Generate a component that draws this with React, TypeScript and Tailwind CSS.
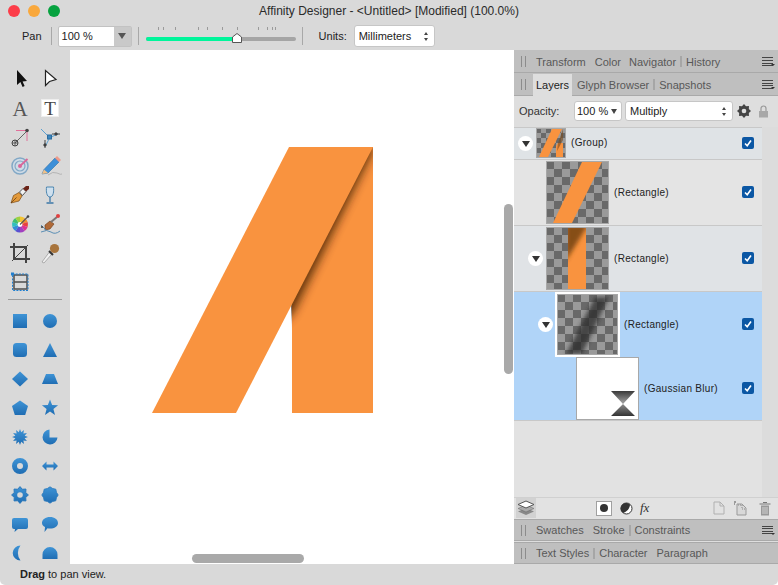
import { ReactNode } from 'react';

const sans = 'font-["Liberation_Sans",Arial,sans-serif]';

const starPoints = (n: number, outer: number, inner: number, start = -90) =>
  Array.from({ length: n * 2 }, (_, i) => {
    const r = i % 2 === 0 ? outer : inner;
    const a = ((start + (i * 180) / n) * Math.PI) / 180;
    return `${(12 + r * Math.cos(a)).toFixed(2)},${(12 + r * Math.sin(a)).toFixed(2)}`;
  }).join(' ');

const wheelColors = ['#f4c430', '#f08a30', '#e84040', '#e03090', '#a040c0', '#5a50d0', '#3090d8', '#30c0c0', '#40c070', '#a0d040'];

function ColorWheel() {
  const cx = 12;
  const cy = 12.5;
  const r = 8;
  return (
    <g>
      {wheelColors.map((c, i) => {
        const a0 = (i * 2 * Math.PI) / wheelColors.length - Math.PI / 2;
        const a1 = ((i + 1) * 2 * Math.PI) / wheelColors.length - Math.PI / 2;
        const d = `M${cx} ${cy} L${cx + r * Math.cos(a0)} ${cy + r * Math.sin(a0)} A${r} ${r} 0 0 1 ${cx + r * Math.cos(a1)} ${cy + r * Math.sin(a1)} Z`;
        return <path key={c} d={d} fill={c} />;
      })}
      <circle cx={cx} cy={cy} r="2.4" fill="#fff" />
      <path d="M12 12.5 L20 4.5" stroke="#555" strokeWidth="1.1" />
      <circle cx="20" cy="4.5" r="1.3" fill="#444" />
    </g>
  );
}

function Icon({ children }: { children: ReactNode }) {
  return (
    <svg width="24" height="24" viewBox="0 0 24 24" className="block">
      <defs>
        <linearGradient id="blue" x1="0" y1="0" x2="0" y2="1">
          <stop offset="0" stopColor="#3f94d6" />
          <stop offset="1" stopColor="#1f6db3" />
        </linearGradient>
      </defs>
      {children}
    </svg>
  );
}

const tools: ReactNode[] = [
  <path d="M9 3 L9 18 L12.4 15 L14.6 20 L16.6 19 L14.6 14.4 L19 14 Z" fill="#111" />,
  <path d="M7.5 3.5 L7.5 18.5 L11.5 14.5 L18 12.5 Z" fill="#fff" stroke="#222" strokeWidth="1.2" />,
  <text x="12" y="19.5" textAnchor="middle" fontFamily="Liberation Serif, serif" fontSize="21" fill="#555">A</text>,
  <g>
    <rect x="3.5" y="3.5" width="17" height="17" fill="#fff" stroke="#eee" strokeWidth="1" />
    <text x="12" y="18.5" textAnchor="middle" fontFamily="Liberation Serif, serif" fontSize="19" fill="#444">T</text>
  </g>,
  <g fill="none">
    <path d="M8 5.5 H19 V16" stroke="#e0709a" strokeWidth="1" />
    <path d="M7 18 L19 6" stroke="#666" strokeWidth="1" />
    <circle cx="19" cy="5.5" r="1.8" fill="#444" />
    <circle cx="7" cy="18" r="3" stroke="#444" />
    <path d="M4 18 H10 M7 15 V21" stroke="#444" strokeWidth="0.8" />
  </g>,
  <g fill="none" stroke="#444">
    <path d="M3 4 L10 11 M13 12 L20 9 M11 14 L8 20" stroke="#5a9fd0" strokeWidth="1" />
    <path d="M14 9 H22 M7 15 V23" strokeWidth="1" />
    <rect x="9.5" y="10" width="4" height="4" fill="#3d85bd" stroke="#2a6c9f" />
    <circle cx="18" cy="9" r="1.2" fill="#333" />
    <circle cx="7" cy="20" r="1.2" fill="#333" />
  </g>,
  <g fill="none">
    <circle cx="12" cy="12" r="8" fill="#cfdbe6" stroke="#82a8c6" strokeWidth="1.5" />
    <circle cx="12" cy="12" r="5" stroke="#82a8c6" strokeWidth="1.2" />
    <circle cx="12" cy="12" r="2" fill="#d8689a" />
    <path d="M12 12 L19.5 5" stroke="#d8689a" strokeWidth="1.8" />
  </g>,
  <g fill="none">
    <path d="M4 20 L6 15.5 L17 4 L21 8 L10 19 Z" fill="#3d8fd8" stroke="#2a6ea8" strokeWidth="0.6" />
    <path d="M17 4 L19 2 L23 6 L21 8 Z" fill="#ee9a8a" />
    <path d="M4 20 L6 15.5 L10 19 Z" fill="#f0c088" />
    <path d="M10 21 Q15 17 19 19 T24 20" stroke="#aaa" strokeWidth="0.8" />
  </g>,
  <g>
    <path d="M3 20 L5.5 12.5 L11 9.5 L14 13 L11 18 Z" fill="#e39a3c" stroke="#7a4a14" strokeWidth="0.7" />
    <path d="M3 20 L8.5 14.5" stroke="#5a3510" strokeWidth="0.7" />
    <path d="M11.5 9 L15 5.5 L18 8.5 L14.5 12.5 Z" fill="#f2f2f2" stroke="#333" strokeWidth="0.8" />
    <path d="M15 5.5 L18 3 L21 3 L21 6 L18 8.5 Z" fill="#6a2418" />
  </g>,
  <g>
    <path d="M8.5 4 H15.5 C16 8 15.5 14 12 14 C8.5 14 8 8 8.5 4 Z" fill="#cfe0ee" stroke="#4d86b0" strokeWidth="1" />
    <path d="M12 14 V19 M8.5 20 H15.5" stroke="#3d78a8" strokeWidth="1.3" />
  </g>,
  <ColorWheel />,
  <g fill="none">
    <path d="M7 13 L12 9 L16 12 L12 17 L7 18 Z" fill="#b06a38" stroke="#6a3a18" strokeWidth="0.6" />
    <path d="M13 10 L19 5" stroke="#777" strokeWidth="2" />
    <circle cx="20" cy="4" r="2" fill="#e04040" />
    <path d="M3 13 L8 18 M3 20 Q9 17 13 20 T22 19" stroke="#4d86b0" strokeWidth="0.9" />
    <circle cx="4" cy="15" r="1.1" fill="#444" />
  </g>,
  <g fill="none" stroke="#444">
    <rect x="6" y="6" width="12" height="12" strokeWidth="2" />
    <path d="M2 6 H6 M6 2 V6 M18 18 V22 M18 18 H22" strokeWidth="2" />
    <path d="M4 20 L20 4" strokeWidth="1" />
  </g>,
  <g>
    <path d="M4 21 L11 11.5 L13.5 13.5 L6 22 Z" fill="#f0f0f0" stroke="#888" strokeWidth="0.6" />
    <path d="M11 10 L15 14" stroke="#333" strokeWidth="2" />
    <circle cx="16.5" cy="7.5" r="4.6" fill="#a8743c" />
  </g>,
  <g fill="none">
    <rect x="6" y="5" width="13" height="14" stroke="#555" strokeWidth="1.6" />
    <path d="M6 12 H19" stroke="#555" strokeWidth="1.6" />
    <rect x="4.5" y="4" width="15.5" height="16.5" stroke="#1f7fd0" strokeWidth="1" strokeDasharray="2 1.2" />
    <rect x="3" y="2.5" width="3" height="3" fill="#1f7fd0" />
  </g>,
];

const shapes: ReactNode[] = [
  <rect x="5" y="5" width="14" height="14" fill="url(#blue)" />,
  <circle cx="12" cy="12" r="7" fill="url(#blue)" />,
  <rect x="5" y="5" width="14" height="14" rx="3.5" fill="url(#blue)" />,
  <path d="M12 5 L19 19 H5 Z" fill="url(#blue)" />,
  <path d="M12 4.5 L20 12 L12 19.5 L4 12 Z" fill="url(#blue)" />,
  <path d="M8 7 H16 L20 17 H4 Z" fill="url(#blue)" />,
  <path d="M12 4.5 L20 10 L17.2 19 H6.8 L4 10 Z" fill="url(#blue)" />,
  <polygon points={starPoints(5, 8.5, 3.6)} fill="url(#blue)" />,
  <polygon points={starPoints(12, 8, 4.8)} fill="url(#blue)" />,
  <path d="M11.5 4.5 A7.5 7.5 0 1 0 19.5 12.5 H11.5 Z" fill="url(#blue)" />,
  <path fillRule="evenodd" d="M12 4 A8 8 0 1 1 12 20 A8 8 0 1 1 12 4 Z M12 9 A3 3 0 1 0 12 15 A3 3 0 1 0 12 9 Z" fill="url(#blue)" />,
  <path d="M4 12 L8.5 7.5 V10.5 H15.5 V7.5 L20 12 L15.5 16.5 V13.5 H8.5 V16.5 Z" fill="url(#blue)" />,
  <g>
    <polygon points={starPoints(8, 8.4, 6.2, -90)} fill="url(#blue)" stroke="#2a78bb" strokeWidth="1" strokeLinejoin="round" />
    <circle cx="12" cy="12" r="2.8" fill="#d8d8d8" />
  </g>,
  <polygon points={starPoints(8, 8.2, 7, -90)} fill="url(#blue)" stroke="#2a78bb" strokeWidth="0.8" strokeLinejoin="round" />,
  <path d="M6 6 H18 A2 2 0 0 1 20 8 V15 A2 2 0 0 1 18 17 H10 L6.5 20 L7 17 H6 A2 2 0 0 1 4 15 V8 A2 2 0 0 1 6 6 Z" fill="url(#blue)" />,
  <path d="M12 5 C16.5 5 20 7.5 20 11 C20 14.5 16.5 16.5 12 16.5 C11 16.5 10.2 16.4 9.5 16.2 L6.5 20 L7 15 C5 14 4 12.7 4 11 C4 7.5 7.5 5 12 5 Z" fill="url(#blue)" />,
  <path d="M12.5 4.5 A7.8 7.5 0 0 0 12.5 19.5 A12 12 0 0 1 12.5 4.5 Z" fill="url(#blue)" />,
  <path d="M4.5 18 V13.5 A7.5 7.5 0 0 1 19.5 13.5 V18 Z" fill="url(#blue)" />,
];

function Grip() {
  return (
    <div className="w-[5px] h-[11px] border-x border-[#8c8c8c] shrink-0" />
  );
}

function PanelMenu() {
  return (
    <div className="ml-auto mr-[3px] relative w-[13px] h-[9px] flex flex-col justify-between">
      <div className="h-px w-[11px] bg-[#444]" />
      <div className="h-px w-[11px] bg-[#444]" />
      <div className="h-px w-[11px] bg-[#444]" />
      <div className="h-px w-[11px] bg-[#444]" />
      <div className="absolute right-0 bottom-0 w-0 h-0 border-x-[2px] border-t-[2px] border-x-transparent border-t-[#333]" />
    </div>
  );
}

function TabBar({ tabs, menu = true, className = '' }: { tabs: ReactNode; menu?: boolean; className?: string }) {
  return (
    <div className={`flex items-center pl-[7px] bg-[#bfbfbf] border-b border-[#a9a9a9] text-[#585858] text-[11px] ${className}`}>
      <Grip />
      <div className="flex items-center ml-[10px] h-full">{tabs}</div>
      {menu && <PanelMenu />}
    </div>
  );
}

function TabSep() {
  return <div className="w-[2px] h-[11px] bg-[#a6a6a6] mx-[4px]" />;
}

function Disclosure({ className = '' }: { className?: string }) {
  return (
    <div className={`w-[15px] h-[15px] rounded-full bg-white flex items-center justify-center shrink-0 ${className}`}>
      <div className="w-0 h-0 border-x-[4px] border-t-[6px] border-x-transparent border-t-[#333] mt-px" />
    </div>
  );
}

function Check() {
  return (
    <div className="ml-auto mr-[8px] w-[12px] h-[12px] rounded-[2px] bg-[#0b57a4] flex items-center justify-center shrink-0">
      <svg width="10" height="10" viewBox="0 0 10 10">
        <path d="M2 5.5 L4.2 7.8 L8 2.5" fill="none" stroke="#fff" strokeWidth="1.6" />
      </svg>
    </div>
  );
}

function Checker({ id, tile = 8, size = 63, children }: { id: string; tile?: number; size?: number; children?: ReactNode }) {
  return (
    <svg width={size} height={size} viewBox={`0 0 ${size} ${size}`} className="block shrink-0">
      <defs>
        <pattern id={id} width={tile * 2} height={tile * 2} patternUnits="userSpaceOnUse">
          <rect width={tile * 2} height={tile * 2} fill="#9a9a9a" />
          <rect width={tile} height={tile} fill="#696969" />
          <rect x={tile} y={tile} width={tile} height={tile} fill="#696969" />
        </pattern>
        <filter id={`${id}-blur`} x="-50%" y="-50%" width="200%" height="200%">
          <feGaussianBlur stdDeviation="2.2" />
        </filter>
      </defs>
      <rect width={size} height={size} fill={`url(#${id})`} />
      {children}
      <rect x="0.5" y="0.5" width={size - 1} height={size - 1} fill="none" stroke="#a8a8a8" />
    </svg>
  );
}

function Label({ children, className = '' }: { children: ReactNode; className?: string }) {
  return <span className={`text-[10px] tracking-[0.3px] text-[#222] whitespace-nowrap ${className}`}>{children}</span>;
}

function Stepper({ className = '' }: { className?: string }) {
  return (
    <div className={`flex flex-col gap-[3px] ${className}`}>
      <div className="w-0 h-0 border-x-[2.5px] border-b-[3px] border-x-transparent border-b-[#444]" />
      <div className="w-0 h-0 border-x-[2.5px] border-t-[3px] border-x-transparent border-t-[#444]" />
    </div>
  );
}

export default function App() {
  return (
    <div className={`w-[778px] h-[585px] overflow-hidden flex flex-col bg-[#d9d9d9] rounded-b-[5px] text-[11px] text-[#222] ${sans}`}>
      {/* title bar */}
      <div className="h-[22px] shrink-0 flex items-center relative">
        <div className="flex gap-[8px] pl-[8px]">
          <div className="w-[12px] h-[12px] rounded-full bg-[#fc3d49]" />
          <div className="w-[12px] h-[12px] rounded-full bg-[#f9a83c]" />
          <div className="w-[12px] h-[12px] rounded-full bg-[#06a23f]" />
        </div>
        <div className="absolute inset-x-0 top-[2px] text-center text-[12px] text-[#2a2a2a]">
          Affinity Designer - &lt;Untitled&gt; [Modified] (100.0%)
        </div>
      </div>

      {/* toolbar */}
      <div className="h-[28px] shrink-0 flex items-center pl-[22px]">
        <span className="text-[#222]">Pan</span>
        <div className="w-px h-[18px] bg-[#a8a8a8] ml-[9px]" />
        <div className="ml-[6px] w-[74px] h-[21px] flex bg-white rounded-[2px] border border-[#c2c2c2]">
          <span className="flex-1 pl-[3px] leading-[19px]">100 %</span>
          <div className="w-[17px] bg-[#c9c9c9] flex items-center justify-center">
            <div className="w-0 h-0 border-x-[4px] border-t-[6px] border-x-transparent border-t-[#555]" />
          </div>
        </div>
        <div className="w-px h-[18px] bg-[#a8a8a8] ml-[6px]" />
        <div className="ml-[7px] w-[150px] h-[28px] relative">
          {/* slider ticks */}
          <svg width="150" height="8" className="block mt-[4px]">
            {[12, 17, 29, 52, 61, 76, 91, 112, 121, 126, 129].map((x) => (
              <rect key={x} x={x} y="1" width="1" height="3" fill="#9a9a9a" />
            ))}
          </svg>
          <div className="absolute left-0 right-0 top-[15px] h-[4px] rounded-full bg-[#a5a5a5]" />
          <div className="absolute left-0 w-[90px] top-[15px] h-[4px] rounded-full bg-[#00f59b]" />
          <svg width="10" height="10" className="absolute left-[86px] top-[11px]">
            <path d="M0.5 4 L5 0.5 L9.5 4 V9.5 H0.5 Z" fill="#fff" stroke="#555" />
          </svg>
        </div>
        <div className="w-px h-[18px] bg-[#a8a8a8] ml-[6px]" />
        <span className="ml-[16px]">Units:</span>
        <div className="ml-[7px] w-[81px] h-[22px] flex items-center bg-white rounded-[3px] border border-[#c6c6c6] pl-[4px]">
          <span>Millimeters</span>
          <Stepper className="ml-auto mr-[6px]" />
        </div>
      </div>

      {/* main */}
      <div className="flex-1 flex min-h-0">
        <div className="w-[70px] shrink-0 pt-[14px]">
          <div className="grid grid-cols-[30px_30px] auto-rows-[29px] pl-[5px] items-center justify-items-center">
            {tools.map((t, i) => (
              <Icon key={i}>{t}</Icon>
            ))}
          </div>
          <div className="h-px mx-[8px] mt-[3px] mb-[6px] bg-[#9c9c9c]" />
          <div className="grid grid-cols-[30px_30px] auto-rows-[29px] pl-[5px] items-center justify-items-center">
            {shapes.map((s, i) => (
              <Icon key={i}>{s}</Icon>
            ))}
          </div>
        </div>

        {/* canvas */}
        <div className="w-[444px] shrink-0 bg-white relative overflow-hidden">
          <svg width="444" height="514" className="absolute inset-0">
            <defs>
              <filter id="shadow" x="-30%" y="-30%" width="160%" height="160%">
                <feGaussianBlur stdDeviation="5" />
              </filter>
              <clipPath id="rectClip">
                <path d="M221 97 H303 V363 H221 Z" />
              </clipPath>
            </defs>
            <path d="M222 97 H303 V363 H222 Z" fill="#f9933f" />
            <g clipPath="url(#rectClip)">
              <path d="M200 97 H305 L224 262 L205 282 Z" fill="#3d1f00" opacity="0.8" filter="url(#shadow)" />
            </g>
            <path d="M219 97 H303 L166 363 H82 Z" fill="#f9933f" />
          </svg>
          <div className="absolute left-[434px] top-[154px] w-[9px] h-[170px] rounded-full bg-[#a9a9a9]" />
          <div className="absolute left-[122px] top-[504px] w-[112px] h-[9px] rounded-full bg-[#a9a9a9]" />
        </div>

        {/* right panels */}
        <div className="flex-1 flex flex-col min-w-0 bg-[#e0e0e0]">
          <TabBar
            className="h-[23px] pt-[2px]"
            tabs={
              <>
                <span>Transform</span>
                <span className="ml-[9px]">Color</span>
                <span className="ml-[8px]">Navigator</span>
                <TabSep />
                <span>History</span>
              </>
            }
          />
          <TabBar
            className="h-[23px] pt-[2px]"
            tabs={
              <>
                <span className="-ml-[3px] -mb-px px-[3px] h-[22px] leading-[23px] bg-[#dedede] text-[#222]">Layers</span>
                <span className="ml-[5px] mt-[2px]">Glyph Browser</span>
                <TabSep />
                <span className="mt-[2px]">Snapshots</span>
              </>
            }
          />
          <div className="h-[31px] shrink-0 flex items-center pl-[5px] bg-[#dedede]">
            <span className="w-[55px] text-[#333]">Opacity:</span>
            <div className="w-[48px] h-[20px] bg-white rounded-[3px] border border-[#c6c6c6] flex items-center pl-[2px]">
              <span>100 %</span>
              <div className="ml-auto mr-[4px] w-0 h-0 border-x-[3px] border-t-[5px] border-x-transparent border-t-[#444]" />
            </div>
            <div className="ml-[3px] w-[108px] h-[20px] bg-white rounded-[3px] border border-[#c6c6c6] flex items-center pl-[4px]">
              <span className="mt-px">Multiply</span>
              <Stepper className="ml-auto mr-[6px]" />
            </div>
            <svg width="14" height="14" viewBox="0 0 24 24" className="ml-[4px]">
              <polygon points={starPoints(8, 12, 9)} fill="#444" />
              <circle cx="12" cy="12" r="4" fill="#dedede" />
            </svg>
            <svg width="11" height="13" viewBox="0 0 11 13" className="ml-[7px]">
              <path d="M3 6 V3.5 A2.5 2.5 0 0 1 8 3.5 V6" fill="none" stroke="#999" strokeWidth="1.2" />
              <rect x="1" y="6" width="9" height="6.5" fill="#a8a8a8" />
            </svg>
          </div>

          {/* layer list */}
          <div className="h-[370px] shrink-0 flex">
            <div className="w-[248px] shrink-0 bg-[#e2e2e2] flex flex-col">
              <div className="h-[33px] flex items-center pl-[4px] bg-[#dfe3e6] border-y border-[#c8c8c8]">
                <Disclosure />
                <div className="ml-[3px]">
                  <Checker id="c0" tile={5} size={30}>
                    <path d="M22 15 H27 V29 H20 V18 Z" fill="#f9933f" />
                    <path d="M22 15 L27 1 V12 L21 23 Z" fill="#7a4a1a" opacity="0.6" />
                    <path d="M16 1 H26 L12 29 H3 Z" fill="#f9933f" />
                  </Checker>
                </div>
                <Label className="ml-[5px] -mt-px">(Group)</Label>
                <Check />
              </div>
              <div className="h-[66px] flex items-center pl-[32px] bg-[#e4e4e4] border-b border-[#c8c8c8]">
                <Checker id="c1">
                  <path d="M36 1 H56 L26 62 H7 Z" fill="#f9933f" />
                </Checker>
                <Label className="ml-[5px]">(Rectangle)</Label>
                <Check />
              </div>
              <div className="h-[66px] flex items-center pl-[14px] bg-[#e0e3e6] border-b border-[#c8c8c8]">
                <Disclosure />
                <div className="ml-[3px]">
                  <Checker id="c2">
                    <rect x="22" y="1" width="18" height="61" fill="#f9933f" />
                    <clipPath id="c2clip">
                      <rect x="22" y="1" width="18" height="61" />
                    </clipPath>
                    <g clipPath="url(#c2clip)">
                      <path d="M20 -2 H42 L20 34 Z" fill="#6a3c10" opacity="0.8" filter="url(#c2-blur)" />
                    </g>
                  </Checker>
                </div>
                <Label className="ml-[5px]">(Rectangle)</Label>
                <Check />
              </div>
              <div className="bg-[#b0d4f8] flex flex-col border-b border-[#c8c8c8]">
                <div className="h-[65px] flex items-center pl-[24px]">
                  <Disclosure />
                  <div className="ml-[2px] border-2 border-white">
                    <Checker id="c3" size={61}>
                      <path d="M38 3 H52 L25 60 H9 Z" fill="#2a2a2a" opacity="0.75" filter="url(#c3-blur)" />
                    </Checker>
                  </div>
                  <Label className="ml-[4px]">(Rectangle)</Label>
                  <Check />
                </div>
                <div className="h-[63px] flex items-center pl-[62px]">
                  <svg width="63" height="63" viewBox="0 0 63 63" className="block shrink-0">
                    <defs>
                      <linearGradient id="hourglass" x1="0" y1="0" x2="0" y2="1">
                        <stop offset="0" stopColor="#3a3a3a" />
                        <stop offset="0.45" stopColor="#999" />
                        <stop offset="1" stopColor="#333" />
                      </linearGradient>
                    </defs>
                    <rect x="0.5" y="0.5" width="62" height="62" fill="#fff" stroke="#a8a8a8" />
                    <path d="M35 34 H59 L47 47 L59 59 H35 L47 47 Z" fill="url(#hourglass)" />
                  </svg>
                  <Label className="ml-[5px]">(Gaussian Blur)</Label>
                  <Check />
                </div>
              </div>
            </div>
            <div className="flex-1 bg-[#dcdcdc]" />
          </div>

          {/* layer actions */}
          <div className="h-[22px] shrink-0 flex items-center bg-[#e2e2e2] border-t border-[#d0d0d0]">
            <div className="ml-[2px] w-[20px] h-[20px] bg-[#d2d2d2] flex items-center justify-center">
              <svg width="18" height="16" viewBox="0 0 18 16">
                <path d="M9 8 L17 11.5 L9 15 L1 11.5 Z" fill="#888" />
                <path d="M9 5 L17 8.5 L9 12 L1 8.5 Z" fill="#aaa" stroke="#666" strokeWidth="0.5" />
                <path d="M9 1 L17 4.5 L9 8 L1 4.5 Z" fill="#fff" stroke="#555" />
              </svg>
            </div>
            <div className="ml-[60px] w-[16px] h-[15px] bg-white border border-[#a0a0a0] flex items-center justify-center">
              <div className="w-[8px] h-[8px] rounded-full bg-[#333]" />
            </div>
            <svg width="13" height="13" viewBox="0 0 13 13" className="ml-[8px]">
              <circle cx="6.5" cy="6.5" r="5.5" fill="#fff" stroke="#333" />
              <path d="M6.5 1 A5.5 5.5 0 0 0 3 11 C7 10 10 6 10 2.5 A5.5 5.5 0 0 0 6.5 1 Z" fill="#333" />
            </svg>
            <span className="ml-[7px] italic text-[13px] text-[#333] font-['Liberation_Serif',serif]">fx</span>
            <svg width="12" height="14" viewBox="0 0 12 14" className="ml-[64px]">
              <path d="M1 1 H7 L11 5 V13 H1 Z M7 1 V5 H11" fill="none" stroke="#b0b0b0" />
            </svg>
            <svg width="15" height="15" viewBox="0 0 15 15" className="ml-[8px]">
              <path d="M4 3 H9 L13 7 V14 H4 Z" fill="#d8d8d8" stroke="#999" />
              <path d="M1 1 H3 M1 3 H2" stroke="#555" />
              <path d="M5 4 H9 V8 H13" stroke="#888" fill="none" strokeDasharray="1 1" />
            </svg>
            <svg width="12" height="15" viewBox="0 0 12 15" className="ml-[11px]">
              <path d="M4 1.5 H8 M0.5 3 H11.5" stroke="#777" strokeWidth="1.2" />
              <path d="M2 4.5 H10 V14.5 H2 Z" fill="#999" />
              <path d="M4 6 V13 M6 6 V13 M8 6 V13" stroke="#e0e0e0" strokeWidth="0.8" />
            </svg>
          </div>

          <TabBar
            className="h-[23px] border-t"
            tabs={
              <>
                <span>Swatches</span>
                <span className="ml-[9px]">Stroke</span>
                <TabSep />
                <span>Constraints</span>
              </>
            }
          />
          <div className="h-px bg-[#dedede]" />
          <TabBar
            menu={false}
            className="h-[22px] border-t border-t-[#a9a9a9]"
            tabs={
              <>
                <span>Text Styles</span>
                <TabSep />
                <span>Character</span>
                <span className="ml-[9px]">Paragraph</span>
              </>
            }
          />
          <div className="flex-1" />
        </div>
      </div>

      {/* status bar */}
      <div className="h-[21px] shrink-0 flex items-center pl-[20px] text-[11px] text-[#222]">
        <span className="font-bold">Drag</span>
        <span className="ml-[3px]">to pan view.</span>
      </div>
    </div>
  );
}
